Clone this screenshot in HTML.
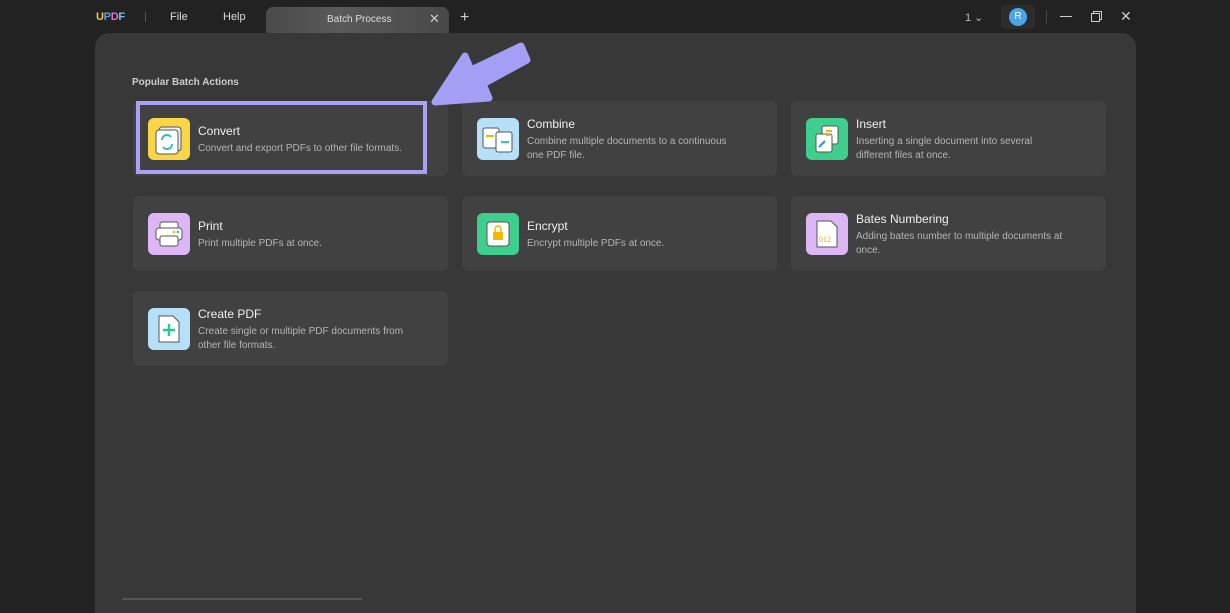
<!DOCTYPE html>
<html><head><meta charset="utf-8"><style>
*{margin:0;padding:0;box-sizing:border-box}
body{width:1230px;height:600px;background:#222;font-family:"Liberation Sans",sans-serif;position:relative;overflow:hidden;color:#eee}
.abs{position:absolute}
.top{font-size:11px;color:#ddd}
.panel{left:95px;top:33px;width:1041px;height:580px;background:#383838;border-radius:14px 14px 0 0}
.card{position:absolute;width:315px;height:75px;background:#414141;border-radius:6px}
.ic{position:absolute;left:15px;width:42px;height:42px;border-radius:6px}
.t{position:absolute;left:65px;font-size:12px;color:#f0f0f0}
.d{position:absolute;left:65px;font-size:10px;color:#b5b5b5;line-height:14px;width:205px}
</style></head><body>
<div class="abs" style="left:96px;top:11px;font-size:11px;font-weight:bold;letter-spacing:-0.3px"><span style="color:#f5c63c">U</span><span style="color:#4fa3f5">P</span><span style="color:#e86fd0">D</span><span style="color:#6fc7f0">F</span></div>
<div class="abs" style="left:145px;top:12px;width:1px;height:10px;background:#555"></div>
<div class="abs top" style="left:170px;top:11px">File</div>
<div class="abs top" style="left:223px;top:11px">Help</div>
<div class="abs" style="left:266px;top:7px;width:183px;height:27px;background:linear-gradient(90deg,#4a4a4a,#5a5a5a 40%,#484848);border-radius:7px 7px 0 0"></div>
<div class="abs top" style="left:327px;top:14px;font-size:10px">Batch Process</div>
<div class="abs" style="left:429px;top:11px;font-size:13px;color:#ccc">✕</div>
<div class="abs" style="left:460px;top:9px;font-size:16px;color:#ccc">+</div>
<div class="abs top" style="left:965px;top:11px;color:#bbb">1 ⌄</div>
<div class="abs" style="left:1001px;top:5px;width:34px;height:24px;background:#2c2c2c;border-radius:4px"></div>
<div class="abs" style="left:1009px;top:8px;width:18px;height:18px;border-radius:50%;background:#4aa6e6;color:#fff;font-size:10px;text-align:center;line-height:18px">R</div>
<div class="abs" style="left:1046px;top:10px;width:1px;height:14px;background:#444"></div>
<div class="abs" style="left:1060px;top:16px;width:12px;height:1px;background:#ccc"></div>
<div class="abs" style="left:1093px;top:11px;width:9px;height:9px;border:1px solid #ccc"></div>
<div class="abs" style="left:1091px;top:13px;width:9px;height:9px;border:1px solid #ccc;background:#222"></div>
<div class="abs" style="left:1120px;top:8px;font-size:14px;color:#ccc">✕</div>
<div class="abs panel"></div>
<div class="abs" style="left:132px;top:77px;font-size:10px;color:#ccc;font-weight:bold">Popular Batch Actions</div>

<div class="card" style="left:133px;top:101px"><div class="ic" style="top:17px;background:#f8d648"><svg width="42" height="42"><rect x="11" y="9" width="22" height="24" rx="3" fill="#eee" stroke="#555"/><rect x="8" y="12" width="22" height="24" rx="3" fill="#fff" stroke="#555"/><path d="M14 22a5 5 0 0 1 9-3M24 26a5 5 0 0 1-9 3" stroke="#3bb" stroke-width="2" fill="none"/></svg></div><div class="t" style="top:23px">Convert</div><div class="d" style="top:41px;width:240px">Convert and export PDFs to other file formats.</div></div>
<div class="abs" style="left:136px;top:101px;width:291px;height:73px;border:4px solid #a8a1f6"></div>

<div class="card" style="left:462px;top:101px"><div class="ic" style="top:17px;background:#b6e0f8"><svg width="42" height="42"><rect x="6" y="10" width="16" height="20" rx="2" fill="#fff" stroke="#555"/><rect x="19" y="14" width="16" height="20" rx="2" fill="#fff" stroke="#555"/><path d="M9 18h8" stroke="#f5b800" stroke-width="2"/><path d="M24 24h8" stroke="#3c9" stroke-width="2"/></svg></div><div class="t" style="top:16px">Combine</div><div class="d" style="top:34px">Combine multiple documents to a continuous one PDF file.</div></div>

<div class="card" style="left:791px;top:101px"><div class="ic" style="top:17px;background:#3ecf8e"><svg width="42" height="42"><rect x="16" y="8" width="16" height="18" rx="2" fill="#fff" stroke="#555"/><rect x="10" y="16" width="16" height="18" rx="2" fill="#fff" stroke="#555"/><path d="M20 13h6M20 17h4" stroke="#f5b800" stroke-width="2"/><path d="M19 23l-6 6" stroke="#38e" stroke-width="2"/></svg></div><div class="t" style="top:16px">Insert</div><div class="d" style="top:34px;width:200px">Inserting a single document into several different files at once.</div></div>

<div class="card" style="left:133px;top:196px"><div class="ic" style="top:17px;background:#dcb6f5"><svg width="42" height="42"><rect x="12" y="9" width="18" height="8" rx="2" fill="#fff" stroke="#555"/><rect x="8" y="15" width="26" height="12" rx="3" fill="#fff" stroke="#555"/><rect x="12" y="23" width="18" height="10" rx="2" fill="#fff" stroke="#555"/><circle cx="26" cy="19" r="1.3" fill="#f5b800"/><circle cx="30" cy="19" r="1.3" fill="#3c9"/></svg></div><div class="t" style="top:23px">Print</div><div class="d" style="top:41px">Print multiple PDFs at once.</div></div>

<div class="card" style="left:462px;top:196px"><div class="ic" style="top:17px;background:#3ecf8e"><svg width="42" height="42"><rect x="10" y="9" width="22" height="24" rx="3" fill="#fff" stroke="#555"/><rect x="16" y="19" width="10" height="8" rx="1" fill="#f5b800"/><path d="M18 19v-3a3 3 0 0 1 6 0v3" stroke="#f5b800" stroke-width="1.5" fill="none"/></svg></div><div class="t" style="top:23px">Encrypt</div><div class="d" style="top:41px">Encrypt multiple PDFs at once.</div></div>

<div class="card" style="left:791px;top:196px"><div class="ic" style="top:17px;background:#dcb6f5"><svg width="42" height="42"><path d="M11 8h14l6 6v20H11z" fill="#fff" stroke="#555"/><text x="13" y="29" font-size="8" font-family="Liberation Serif" fill="#e9a800">012</text></svg></div><div class="t" style="top:16px">Bates Numbering</div><div class="d" style="top:34px;width:212px">Adding bates number to multiple documents at once.</div></div>

<div class="card" style="left:133px;top:291px"><div class="ic" style="top:17px;background:#b6e0f8"><svg width="42" height="42"><path d="M11 8h14l6 6v20H11z" fill="#fff" stroke="#555"/><path d="M21 16v12M15 22h12" stroke="#2c9" stroke-width="2.5"/></svg></div><div class="t" style="top:16px">Create PDF</div><div class="d" style="top:34px;width:215px">Create single or multiple PDF documents from other file formats.</div></div>

<svg class="abs" style="left:425px;top:38px" width="110" height="72"><path d="M96 8 L102 22 L58 46 L64 60 L10 64 L40 18 L46 32 Z" fill="#a49ef5" stroke="#a49ef5" stroke-width="7" stroke-linejoin="round"/></svg>
<div class="abs" style="left:122px;top:598px;width:240px;height:2px;background:#555"></div>
</body></html>
